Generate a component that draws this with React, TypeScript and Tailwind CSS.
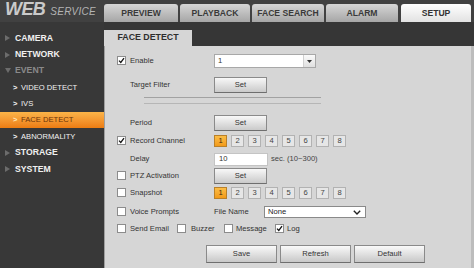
import React from 'react';

const TABS = [
  { label: 'PREVIEW', w: 'w-[74px]' },
  { label: 'PLAYBACK', w: 'w-[70px]' },
  { label: 'FACE SEARCH', w: 'w-[72px]' },
  { label: 'ALARM', w: 'w-[72px]' },
  { label: 'SETUP', w: 'w-[70px]', active: true },
];

const MENU = [
  { label: 'CAMERA', kind: 'top' },
  { label: 'NETWORK', kind: 'top' },
  { label: 'EVENT', kind: 'open' },
  { label: 'VIDEO DETECT', kind: 'sub' },
  { label: 'IVS', kind: 'sub' },
  { label: 'FACE DETECT', kind: 'active' },
  { label: 'ABNORMALITY', kind: 'sub' },
  { label: 'STORAGE', kind: 'top' },
  { label: 'SYSTEM', kind: 'top' },
];

function Check({ on }: { on?: boolean }) {
  return (
    <span className="w-[9px] h-[9px] shrink-0 bg-white border border-[#8c8c8c] flex items-center justify-center">
      {on && (
        <svg width="7" height="7" viewBox="0 0 7 7">
          <path d="M1 3.6 L2.8 5.4 L6 1.2" fill="none" stroke="#111" strokeWidth="1.3" />
        </svg>
      )}
    </span>
  );
}

function Label({ box, on, text }: { box?: boolean; on?: boolean; text: string }) {
  return (
    <div className="w-[97px] shrink-0 flex items-center gap-[4px]">
      {box ? <Check on={on} /> : <span className="w-[9px] shrink-0" />}
      <span>{text}</span>
    </div>
  );
}

function SetButton() {
  return (
    <div className="w-[53px] h-[16px] border border-[#8a8a8a] border-b-[#6e6e6e] bg-gradient-to-b from-[#f8f8f8] to-[#cacaca] flex items-center justify-center">
      Set
    </div>
  );
}

function Channels() {
  return (
    <div className="flex gap-[4px]">
      {[1, 2, 3, 4, 5, 6, 7, 8].map(n => (
        <div
          key={n}
          className={
            n === 1
              ? 'w-[13px] h-[12px] border border-[#b9802a] bg-gradient-to-b from-[#fbbd45] to-[#f29a16] flex items-center justify-center text-[#3a2a10]'
              : 'w-[13px] h-[12px] border border-[#b2b2b2] bg-[#e6e6e6] flex items-center justify-center text-[#444]'
          }
        >
          {n}
        </div>
      ))}
    </div>
  );
}

function BigButton({ text }: { text: string }) {
  return (
    <div className="w-[71px] h-[18px] border border-[#8a8a8a] border-b-[#6e6e6e] bg-gradient-to-b from-[#fafafa] to-[#c8c8c8] flex items-center justify-center">
      {text}
    </div>
  );
}

export default function App() {
  return (
    <div className="w-[474px] h-[268px] overflow-hidden bg-[#393939] font-['Liberation_Sans',Arial,sans-serif]">
      {/* Header */}
      <div className="flex h-[22px] bg-[#414141]">
        <div className="w-[104px] shrink-0 flex items-baseline pl-[5px] italic text-[#cacaca]">
          <span className="text-[18px] leading-none font-bold tracking-[-0.6px]">WEB</span>
          <span className="ml-[5px] text-[10px] leading-none text-[#b4b4b4] tracking-[0.3px]">SERVICE</span>
        </div>
        <div className="flex items-end gap-[2px] pt-[4px]">
          {TABS.map(t => (
            <div
              key={t.label}
              className={
                t.active
                  ? `${t.w} ml-[1px] h-[18px] rounded-t-[3px] bg-gradient-to-b from-[#ffffff] to-[#e2e2e2] flex items-center justify-center text-[8.6px] font-bold text-[#333]`
                  : `${t.w} h-[18px] rounded-t-[3px] bg-gradient-to-b from-[#d6d6d6] to-[#a6a6a6] flex items-center justify-center text-[8.6px] font-bold text-[#3a3a3a]`
              }
            >
              {t.label}
            </div>
          ))}
        </div>
      </div>

      <div className="flex h-[246px]">
        {/* Sidebar */}
        <div className="w-[104px] shrink-0 pt-[8px] bg-[#383838]">
          {MENU.map(m => {
            if (m.kind === 'active') {
              return (
                <div key={m.label} className="h-[16.4px] flex items-center bg-gradient-to-b from-[#fbb448] to-[#ec7c10] text-[7.6px]">
                  <span className="ml-[13px] w-[8px] font-bold text-[#ffe6b8]">&gt;</span>
                  <span className="text-[#6a340a]">{m.label}</span>
                </div>
              );
            }
            if (m.kind === 'sub') {
              return (
                <div key={m.label} className="h-[16.4px] flex items-center text-[7.6px] text-[#f2f2f2]">
                  <span className="ml-[13px] w-[8px] font-bold">&gt;</span>
                  <span>{m.label}</span>
                </div>
              );
            }
            return (
              <div
                key={m.label}
                className={`h-[16.4px] flex items-center text-[8.7px] font-bold ${m.kind === 'open' ? 'text-[#8a8a8a]' : 'text-[#f0f0f0]'}`}
              >
                <span className="ml-[5px] w-[10px] flex items-center">
                  {m.kind === 'open' ? (
                    <svg width="6" height="5" viewBox="0 0 6 5"><path d="M0 0 H6 L3 5 Z" fill="#6c6c6c" /></svg>
                  ) : (
                    <svg width="5" height="6" viewBox="0 0 5 6"><path d="M0 0 L5 3 L0 6 Z" fill="#6c6c6c" /></svg>
                  )}
                </span>
                <span>{m.label}</span>
              </div>
            );
          })}
        </div>

        {/* Main */}
        <div className="flex-1 flex flex-col">
          <div className="h-[24px] shrink-0 bg-[#363636] pt-[8px]">
            <div className="w-[88px] h-[16px] bg-[#d6d6d6] flex items-center justify-center text-[8.8px] font-bold text-[#2e2e2e]">
              FACE DETECT
            </div>
          </div>

          <div className="flex-1 bg-[#d6d6d6] border-l border-[#9e9e9e] border-r-[3px] border-r-[#bcbcbc] pl-[12px] text-[7.6px] text-[#333] flex flex-col">
            {/* Enable */}
            <div className="mt-[7px] h-[16px] flex items-center">
              <Label box on text="Enable" />
              <div className="w-[102px] h-[14px] bg-white border border-[#a8a8a8] flex items-center">
                <span className="flex-1 pl-[3px]">1</span>
                <span className="w-[12px] h-[12px] border-l border-[#d0d0d0] bg-gradient-to-b from-[#fafafa] to-[#e0e0e0] flex items-center justify-center">
                  <svg width="5" height="3" viewBox="0 0 5 3"><path d="M0 0 H5 L2.5 3 Z" fill="#333" /></svg>
                </span>
              </div>
            </div>

            {/* Target Filter */}
            <div className="mt-[8px] h-[16px] flex items-center">
              <Label text="Target Filter" />
              <SetButton />
            </div>

            {/* Divider */}
            <div className="mt-[4px] ml-[27px] w-[177px] h-[7px] border-t border-b border-t-[#a2a2a2] border-b-[#b6b6b6]" />

            {/* Period */}
            <div className="mt-[11px] h-[16px] flex items-center">
              <Label text="Period" />
              <SetButton />
            </div>

            {/* Record Channel */}
            <div className="mt-[2px] h-[16px] flex items-center">
              <Label box on text="Record Channel" />
              <Channels />
            </div>

            {/* Delay */}
            <div className="mt-[2px] h-[16px] flex items-center">
              <Label text="Delay" />
              <div className="w-[54px] h-[13px] bg-white border border-[#c4c4c4] flex items-center pl-[4px]">10</div>
              <span className="ml-[3px] text-[#444]">sec. (10~300)</span>
            </div>

            {/* PTZ */}
            <div className="mt-[1px] h-[16px] flex items-center">
              <Label box text="PTZ Activation" />
              <SetButton />
            </div>

            {/* Snapshot */}
            <div className="mt-[1px] h-[16px] flex items-center">
              <Label box text="Snapshot" />
              <Channels />
            </div>

            {/* Voice */}
            <div className="mt-[3px] h-[16px] flex items-center">
              <Label box text="Voice Prompts" />
              <span className="w-[50px]">File Name</span>
              <div className="w-[102px] h-[12px] bg-white border border-[#8a8a8a] flex items-center">
                <span className="flex-1 pl-[3px] text-[#222]">None</span>
                <svg className="mr-[4px]" width="8" height="5" viewBox="0 0 8 5"><path d="M0.8 0.8 L4 4 L7.2 0.8" fill="none" stroke="#222" strokeWidth="1.4" /></svg>
              </div>
            </div>

            {/* Send Email row */}
            <div className="mt-[1px] h-[16px] flex items-center">
              <div className="w-[60px] flex items-center gap-[4px]"><Check /><span>Send Email</span></div>
              <div className="w-[47px] flex items-center gap-[5px]"><Check /><span>Buzzer</span></div>
              <div className="w-[51px] flex items-center gap-[3px]"><Check /><span>Message</span></div>
              <div className="flex items-center gap-[3px]"><Check on /><span>Log</span></div>
            </div>

            {/* Buttons */}
            <div className="mt-[8px] pl-[89px] flex gap-[3px]">
              <BigButton text="Save" />
              <BigButton text="Refresh" />
              <BigButton text="Default" />
            </div>
          </div>
        </div>
      </div>
    </div>
  );
}
